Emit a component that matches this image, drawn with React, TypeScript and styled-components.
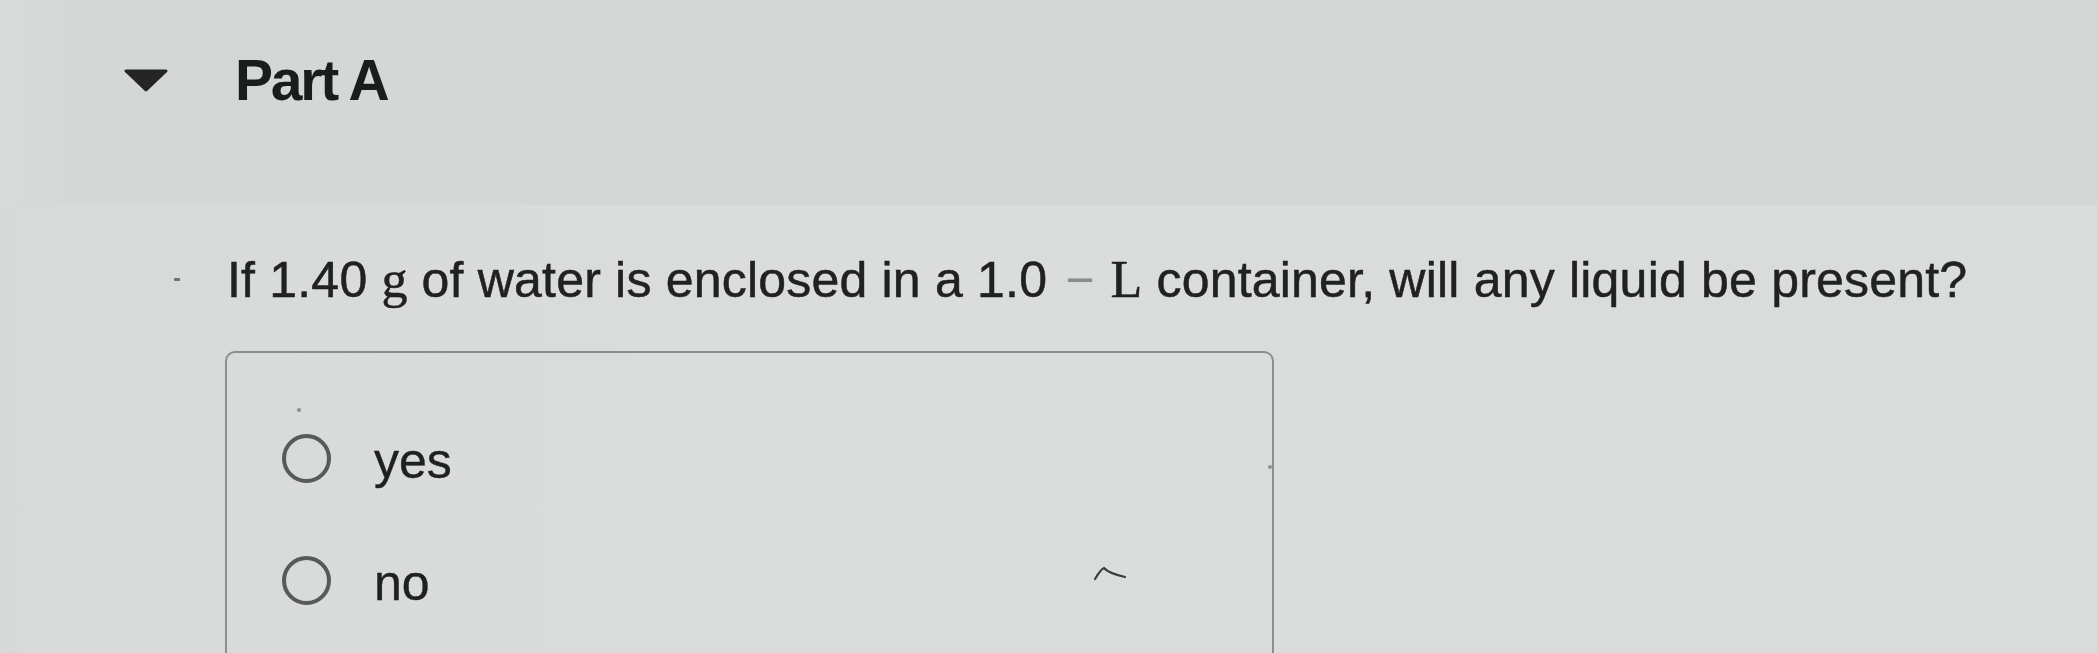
import React from "react";
import styled, { createGlobalStyle } from "styled-components";

const Global = createGlobalStyle`
  html, body {
    margin: 0;
    padding: 0;
    background: #d9dcda;
  }
  body {
    font-family: "Liberation Sans", Arial, Helvetica, sans-serif;
    color: #222;
  }
`;

const Page = styled.div`
  width: 2097px;
  height: 653px;
  overflow: hidden;
  background: linear-gradient(90deg, #d7dad8 0%, #dadddb 40%, #d9dcda 100%);
`;

const Header = styled.header`
  box-sizing: border-box;
  height: 205px;
  padding: 52px 0 0 124px;
  display: flex;
  align-items: flex-start;
  background: linear-gradient(90deg, #d8dbd9 0px, #d4d7d5 90px, #d4d7d5 100%);
`;

const Caret = styled.svg`
  width: 44px;
  height: 23px;
  margin-top: 17px;
  flex: none;
`;

const Title = styled.h2`
  margin: 0 0 0 67px;
  font-size: 57px;
  line-height: 1;
  font-weight: 700;
  letter-spacing: -2.2px;
  color: #1b1c1d;
`;

const Body = styled.section`
  padding-left: 227px;
`;

const Question = styled.p`
  position: relative;
  margin: 49px 0 0 0;
  font-size: 50px;
  line-height: 1;
  letter-spacing: 0.2px;
  color: #202122;
  -webkit-text-stroke: 0.5px #202122;
  white-space: nowrap;
`;

const Bullet = styled.span`
  position: absolute;
  left: -53px;
  top: 24px;
  width: 6px;
  height: 3px;
  background: #6d6f70;
  border-radius: 1px;
`;

const Roman = styled.span`
  font-family: "Liberation Serif", "Times New Roman", serif;
  font-size: 1.04em;
  letter-spacing: 0;
`;

const Minus = styled.span`
  color: #8a8c8d;
  -webkit-text-stroke: 0;
  margin: 0 16px 0 18px;
`;

const AnswerBox = styled.div`
  position: relative;
  box-sizing: border-box;
  margin: 45px 0 0 -2px;
  width: 1049px;
  height: 320px;
  border: 2.5px solid #8d8f8f;
  border-radius: 10px;
  padding: 75px 0 0 55px;
  display: flex;
  flex-direction: column;
  gap: 62px;
`;

const Option = styled.label`
  display: flex;
  align-items: center;
  height: 60px;
  gap: 43px;
  font-size: 50px;
  color: #1f2021;
  -webkit-text-stroke: 0.4px #1f2021;
`;

const Radio = styled.span`
  box-sizing: border-box;
  width: 49px;
  height: 49px;
  border-radius: 50%;
  border: 4px solid #58595a;
  flex: none;
`;

const OptionText = styled.span`
  line-height: 1;
  padding-top: 6px;
`;

const Speck = styled.span<{ $x: number; $y: number }>`
  position: absolute;
  left: ${(p) => p.$x}px;
  top: ${(p) => p.$y}px;
  width: 4px;
  height: 4px;
  border-radius: 50%;
  background: #8c8e8f;
`;

const Mark = styled.svg`
  position: absolute;
  left: 866px;
  top: 212px;
  width: 34px;
  height: 16px;
`;

export default function App() {
  return (
    <>
      <Global />
      <Page>
        <Header>
          <Caret viewBox="0 0 44 23">
            <path d="M2 2 L42 2 L22 21 Z" fill="#242526" stroke="#242526" strokeWidth="3" strokeLinejoin="round" />
          </Caret>
          <Title>Part A</Title>
        </Header>
        <Body>
          <Question>
            <Bullet />
            If 1.40 <Roman>g</Roman> of water is enclosed in a 1.0
            <Minus>−</Minus>
            <Roman>L</Roman> container, will any liquid be present?
          </Question>
          <AnswerBox>
            <Speck $x={70} $y={55} />
            <Speck $x={1041} $y={112} />
            <Mark viewBox="0 0 34 16">
              <path d="M2 14 Q8 4 11 3 Q15 8 32 12" fill="none" stroke="#3a3b3c" strokeWidth="2.2" strokeLinecap="round" />
            </Mark>
            <Option>
              <Radio />
              <OptionText>yes</OptionText>
            </Option>
            <Option>
              <Radio />
              <OptionText>no</OptionText>
            </Option>
          </AnswerBox>
        </Body>
      </Page>
    </>
  );
}
